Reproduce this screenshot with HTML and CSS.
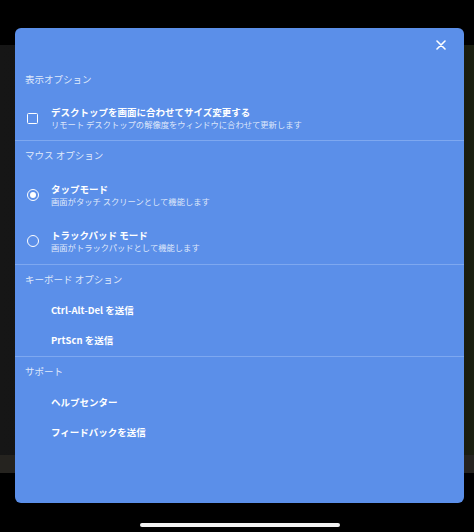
FILE: index.html
```html
<!DOCTYPE html>
<html lang="ja">
<head>
	<meta charset="utf-8">
	<link rel="stylesheet" href="styles.css">
</head>
<body>

	<div class="screen">
		<div class="status-bar"></div>
		<div class="app-area"></div>
		<div class="dock-strip"></div>
		<div class="home-area">
			<div class="home-bar"></div>
		</div>
	</div>

	<!-- options sheet -->
	<div class="sheet">
		<div class="toolbar">
			<button class="close" aria-label="閉じる">
				<svg width="10" height="10" viewBox="0 0 10 10">
					<path d="M1 1 L9 9 M9 1 L1 9" stroke="#fff" stroke-width="1.6" stroke-linecap="round"/>
				</svg>
			</button>
		</div>

		<div class="group-title">表示オプション</div>
		<div class="option check-row">
			<div class="ctl"><span class="checkbox"></span></div>
			<div class="option-text">
				<div class="option-title">デスクトップを画面に合わせてサイズ変更する</div>
				<div class="option-sub">リモート デスクトップの解像度をウィンドウに合わせて更新します</div>
			</div>
		</div>

		<div class="divider"></div>

		<div class="group-title">マウス オプション</div>
		<div class="option">
			<div class="ctl"><span class="radio checked"></span></div>
			<div class="option-text">
				<div class="option-title">タップモード</div>
				<div class="option-sub">画面がタッチ スクリーンとして機能します</div>
			</div>
		</div>
		<div class="option">
			<div class="ctl"><span class="radio"></span></div>
			<div class="option-text">
				<div class="option-title">トラックパッド モード</div>
				<div class="option-sub">画面がトラックパッドとして機能します</div>
			</div>
		</div>

		<div class="divider"></div>

		<div class="group-title">キーボード オプション</div>
		<div class="action">Ctrl-Alt-Del を送信</div>
		<div class="action">PrtScn を送信</div>

		<div class="divider"></div>

		<div class="group-title">サポート</div>
		<div class="action">ヘルプセンター</div>
		<div class="action">フィードバックを送信</div>
	</div>

</body>
</html>
```

FILE: styles.css
```css
*, html, body{
	margin: 0;
	padding: 0;
	box-sizing: border-box;
}
body{
	background: #000;
	font-family: "Noto Sans CJK JP", "Noto Sans", sans-serif;
	color: #fff;
	width: 474px;
	height: 532px;
	overflow: hidden;
	position: relative;
}

/* background behind the sheet */
.screen{
	width: 100%;
}
.status-bar{
	height: 45px;
	background: #000;
}
.app-area{
	height: 410px;
	background: linear-gradient(90deg, #161616 0%, #121212 60%, #14140f 92%, #1b1f10 100%);
}
.dock-strip{
	height: 18px;
	background: #25231f;
}
.home-area{
	padding-top: 50px;
}
.home-bar{
	width: 200px;
	height: 4px;
	margin-left: 140px;
	border-radius: 2px;
	background: #f2f2f2;
}

/* sheet */
.sheet{
	position: absolute;
	top: 28px;
	left: 15px;
	width: 449px;
	height: 475px;
	background: #5b8fe9;
	border-radius: 6px;
}
.toolbar{
	height: 37px;
	display: flex;
	justify-content: flex-end;
	align-items: center;
	padding-right: 18px;
	padding-bottom: 3px;
}
.close{
	width: 10px;
	height: 10px;
	border: none;
	background: none;
	display: flex;
}
.group-title{
	height: 31px;
	padding: 0 10px 3px;
	display: flex;
	align-items: center;
	font-size: 9.5px;
	color: rgba(255,255,255,0.82);
}
.option{
	height: 46px;
	display: flex;
	align-items: center;
	padding-left: 12px;
}
.check-row{
	height: 44px;
}
.ctl{
	width: 24px;
	display: flex;
	align-items: center;
}
.checkbox{
	width: 11px;
	height: 11px;
	border: 1.5px solid #fff;
	border-radius: 1.5px;
}
.radio{
	width: 12px;
	height: 12px;
	border: 1.5px solid #fff;
	border-radius: 50%;
	display: flex;
	align-items: center;
	justify-content: center;
}
.radio.checked::after{
	content: "";
	width: 6px;
	height: 6px;
	border-radius: 50%;
	background: #fff;
}
.option-title{
	font-size: 9.5px;
	font-weight: 700;
	line-height: 12.3px;
}
.option-sub{
	font-size: 8.3px;
	line-height: 12.3px;
	color: rgba(255,255,255,0.8);
}
.action{
	height: 30px;
	padding: 7px 0 0 36px;
	font-size: 9.5px;
	font-weight: 700;
	line-height: 14px;
}
.divider{
	height: 1px;
	background: #7ea8f0;
}
```
